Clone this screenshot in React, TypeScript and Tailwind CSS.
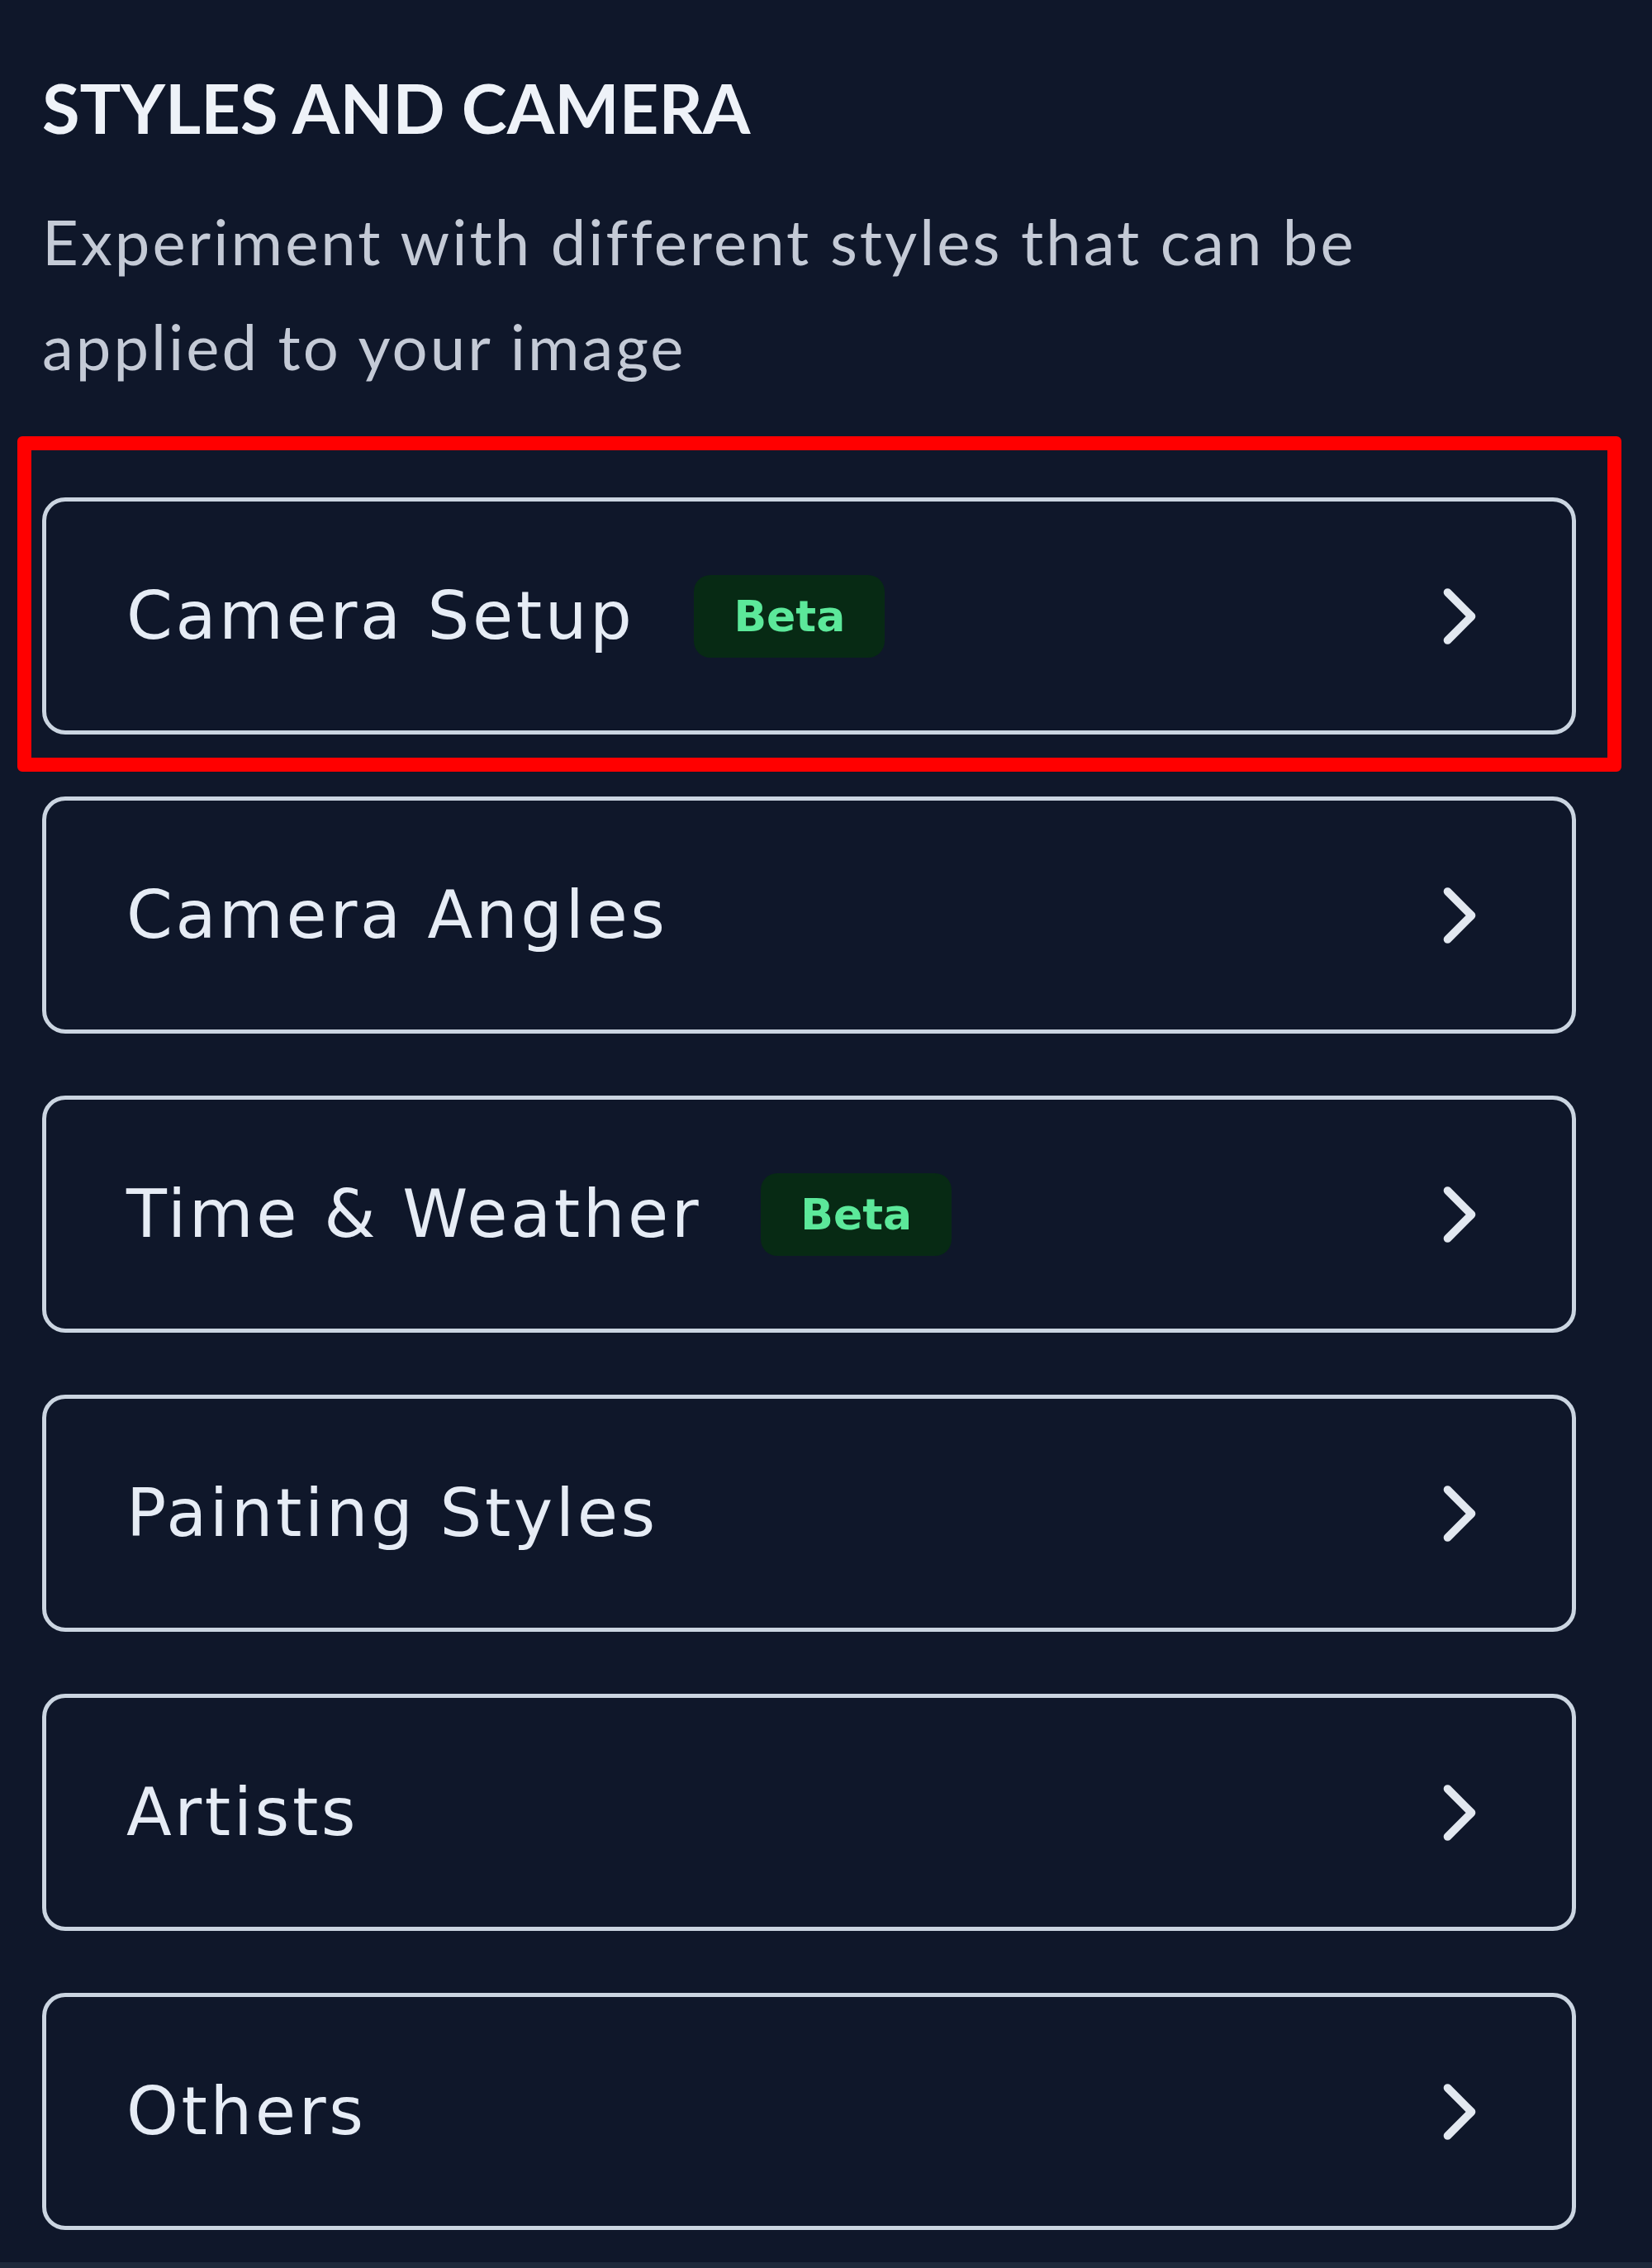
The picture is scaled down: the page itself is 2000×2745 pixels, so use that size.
import { ChevronRight } from "lucide-react";

// Panneau "Styles and Camera" — liste de catégories, la première encadrée en rouge.
const items = [
  { label: "Camera Setup", beta: true, marked: true },
  { label: "Camera Angles" },
  { label: "Time & Weather", beta: true },
  { label: "Painting Styles" },
  { label: "Artists" },
  { label: "Others" },
];

function Row({ label, beta, marked }: { label: string; beta?: boolean; marked?: boolean }) {
  return (
    <div className="relative">
      {marked && (
        <div
          aria-hidden
          className="pointer-events-none absolute -top-[74px] -bottom-[45px] -left-[30px] -right-[55px] rounded-[6px] border-[17px] border-[#ff0000]"
        />
      )}
      <button className="flex h-[287px] w-full items-center rounded-[28px] border-[5px] border-[#cbd5e1] bg-[#0f172a] pl-[97px] pr-[78px] text-left">
        <span className="font-['DejaVu_Sans',sans-serif] text-[80px] leading-none tracking-[0.045em] text-[#e6ecf5]">
          {label}
        </span>
        {beta && (
          <span className="ml-[72px] flex h-[100px] items-center rounded-[20px] bg-[#072a14] px-[48px] font-['DejaVu_Sans',sans-serif] text-[52px] font-bold leading-none text-[#5ce89a]">
            Beta
          </span>
        )}
        <ChevronRight className="ml-auto text-[#e2e8f0]" size={116} strokeWidth={2} />
      </button>
    </div>
  );
}

export default function App() {
  return (
    <main className="min-h-[2745px] w-[2000px] border-b-[7px] border-[#1e293b] bg-[#0f172a] pl-[51px] pr-[92px] pt-[89px] font-['Lato',sans-serif]">
      <h2 className="text-[83px] font-bold leading-[83px] text-[#eef2f8]">STYLES AND CAMERA</h2>
      <p className="mt-[56px] max-w-[1700px] text-[76px] leading-[127px] tracking-[0.04em] text-[#c4cad6]">
        Experiment with different styles that can be applied to your image
      </p>
      <div className="mt-[120px] flex flex-col gap-[75px]">
        {items.map((it) => (
          <Row key={it.label} {...it} />
        ))}
      </div>
    </main>
  );
}
